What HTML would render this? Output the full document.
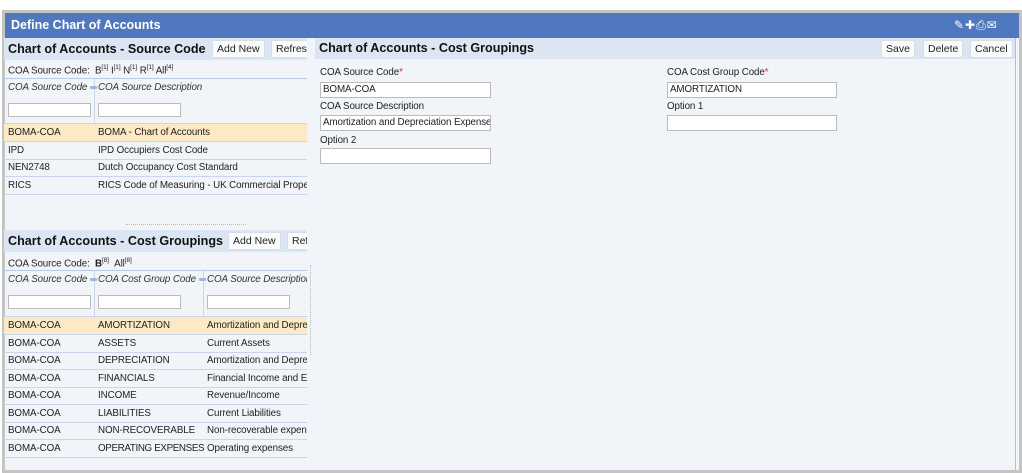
<!DOCTYPE html>
<html><head><style>
*{margin:0;padding:0;box-sizing:border-box}
body{width:1022px;height:473px;background:#fff;font-family:"Liberation Sans",sans-serif;font-size:9.8px;letter-spacing:-0.1px;color:#222;position:relative;overflow:hidden}
.a{position:absolute;white-space:nowrap}
.frame{left:2px;top:10px;width:1020px;height:463px;border:3px solid #c4c4c4;background:#f1f5f9}
.title{left:5px;top:13px;width:1014px;height:25px;background:#5078be;color:#fff;font-weight:bold;font-size:12.5px;line-height:25px;padding-left:6px;letter-spacing:0}
.hdr{background:#dce5f2;font-weight:bold;font-size:12.6px;line-height:22px;padding-left:4px;color:#111;letter-spacing:0}
.btn{background:#fafbfd;border:1px solid #d8dde6;border-radius:2px;font-size:10.5px;line-height:16px;padding:0 4px;font-weight:normal;color:#222}
.inp{background:#fff;border:1px solid #bbb}
.row{left:4px;width:303px;height:18px;border-bottom:1px solid #c9d6ea;line-height:17px}
.row span{position:absolute}
.ih{font-style:italic;color:#333}
.sel{background:#fde9c4}
sup{font-size:6.5px}
.dash{display:inline-block;width:7px;height:3px;background:#9fb6d8;border-radius:1px;margin-left:3px;vertical-align:middle}
.req{color:#c33}
</style></head><body>
<div class="a frame"></div>
<div class="a" style="left:1015px;top:38px;width:1px;height:432px;background:#a9bfe0"></div>
<div class="a title">Define Chart of Accounts</div>
<div class="a" style="left:954px;top:18px;color:#fff;font-size:12px;letter-spacing:1px">&#9998;&#10010;&#9113;&#9993;</div>
<div class="a hdr" style="left:4px;top:38px;width:303px;height:22px;overflow:hidden">Chart of Accounts - Source Code
 <span class="a btn" style="left:208px;top:2px">Add New</span>
 <span class="a btn" style="left:267px;top:2px">Refresh</span></div>
<div class="a" style="left:8px;top:64px">COA Source Code: &nbsp;B<sup>[1]</sup> I<sup>[1]</sup> N<sup>[1]</sup> R<sup>[1]</sup> All<sup>[4]</sup></div>
<div class="a" style="left:4px;top:78px;width:303px;height:1px;background:#b8cae6"></div>
<div class="a" style="left:94px;top:79px;width:1px;height:44px;background:#c9d6ea"></div>
<div class="a ih" style="left:8px;top:82px">COA Source Code<span class="dash"></span></div>
<div class="a ih" style="left:98px;top:82px">COA Source Description</div>
<div class="a inp" style="left:8px;top:103px;width:83px;height:14px"></div>
<div class="a inp" style="left:98px;top:103px;width:83px;height:14px"></div>
<div class="a" style="left:4px;top:123px;width:303px;height:1px;background:#c9d6ea"></div>
<div class="a row sel" style="top:124px"><span style="left:4px">BOMA-COA</span><span style="left:94px">BOMA - Chart of Accounts</span></div>
<div class="a row" style="top:142px"><span style="left:4px">IPD</span><span style="left:94px">IPD Occupiers Cost Code</span></div>
<div class="a row" style="top:159px"><span style="left:4px">NEN2748</span><span style="left:94px">Dutch Occupancy Cost Standard</span></div>
<div class="a row" style="top:177px;overflow:hidden"><span style="left:4px">RICS</span><span style="left:94px">RICS Code of Measuring - UK Commercial Property</span></div>
<div class="a" style="left:126px;top:224px;width:120px;border-top:1px dotted #bbb"></div>
<div class="a hdr" style="left:4px;top:230px;width:303px;height:22px;overflow:hidden">Chart of Accounts - Cost Groupings
 <span class="a btn" style="left:224px;top:2px">Add New</span>
 <span class="a btn" style="left:283px;top:2px">Refresh</span></div>
<div class="a" style="left:8px;top:257px">COA Source Code: &nbsp;<b>B</b><sup>[8]</sup> &nbsp;All<sup>[8]</sup></div>
<div class="a" style="left:4px;top:270px;width:303px;height:1px;background:#b8cae6"></div>
<div class="a" style="left:94px;top:271px;width:1px;height:45px;background:#c9d6ea"></div>
<div class="a" style="left:203px;top:271px;width:1px;height:45px;background:#c9d6ea"></div>
<div class="a ih" style="left:8px;top:274px">COA Source Code<span class="dash"></span></div>
<div class="a ih" style="left:98px;top:274px">COA Cost Group Code<span class="dash"></span></div>
<div class="a ih" style="left:207px;top:274px;width:100px;overflow:hidden">COA Source Description</div>
<div class="a inp" style="left:8px;top:295px;width:83px;height:14px"></div>
<div class="a inp" style="left:98px;top:295px;width:83px;height:14px"></div>
<div class="a inp" style="left:207px;top:295px;width:83px;height:14px"></div>
<div class="a" style="left:4px;top:316px;width:303px;height:1px;background:#c9d6ea"></div>
<div class="a row sel" style="top:317px;overflow:hidden"><span style="left:4px">BOMA-COA</span><span style="left:94px">AMORTIZATION</span><span style="left:203px">Amortization and Depreciation</span></div>
<div class="a row" style="top:335px;overflow:hidden"><span style="left:4px">BOMA-COA</span><span style="left:94px">ASSETS</span><span style="left:203px">Current Assets</span></div>
<div class="a row" style="top:352px;overflow:hidden"><span style="left:4px">BOMA-COA</span><span style="left:94px">DEPRECIATION</span><span style="left:203px">Amortization and Depreciation</span></div>
<div class="a row" style="top:370px;overflow:hidden"><span style="left:4px">BOMA-COA</span><span style="left:94px">FINANCIALS</span><span style="left:203px">Financial Income and Expense</span></div>
<div class="a row" style="top:387px;overflow:hidden"><span style="left:4px">BOMA-COA</span><span style="left:94px">INCOME</span><span style="left:203px">Revenue/Income</span></div>
<div class="a row" style="top:405px;overflow:hidden"><span style="left:4px">BOMA-COA</span><span style="left:94px">LIABILITIES</span><span style="left:203px">Current Liabilities</span></div>
<div class="a row" style="top:422px;overflow:hidden"><span style="left:4px">BOMA-COA</span><span style="left:94px">NON-RECOVERABLE</span><span style="left:203px">Non-recoverable expenses</span></div>
<div class="a row" style="top:440px;overflow:hidden"><span style="left:4px">BOMA-COA</span><span style="left:94px;letter-spacing:-0.35px">OPERATING EXPENSES</span><span style="left:203px">Operating expenses</span></div>
<div class="a" style="left:310px;top:265px;height:90px;border-left:1px dotted #bbb"></div>
<div class="a hdr" style="left:315px;top:38px;width:700px;height:21px;line-height:21px">Chart of Accounts - Cost Groupings
 <span class="a btn" style="left:566px;top:2px">Save</span>
 <span class="a btn" style="left:608px;top:2px">Delete</span>
 <span class="a btn" style="left:655px;top:2px">Cancel</span></div>
<div class="a" style="left:320px;top:67px">COA Source Code<span class="req">*</span></div>
<div class="a inp" style="left:320px;top:82px;width:171px;height:16px;padding-left:2px;line-height:14px">BOMA-COA</div>
<div class="a" style="left:320px;top:101px">COA Source Description</div>
<div class="a inp" style="left:320px;top:115px;width:171px;height:16px;padding-left:2px;line-height:14px;overflow:hidden">Amortization and Depreciation Expense</div>
<div class="a" style="left:320px;top:135px">Option 2</div>
<div class="a inp" style="left:320px;top:148px;width:171px;height:16px"></div>
<div class="a" style="left:667px;top:67px">COA Cost Group Code<span class="req">*</span></div>
<div class="a inp" style="left:667px;top:82px;width:170px;height:16px;padding-left:2px;line-height:14px">AMORTIZATION</div>
<div class="a" style="left:667px;top:101px">Option 1</div>
<div class="a inp" style="left:667px;top:115px;width:170px;height:16px"></div>
</body></html>
